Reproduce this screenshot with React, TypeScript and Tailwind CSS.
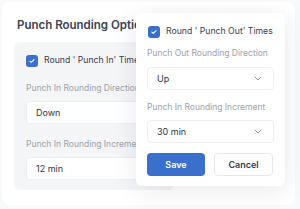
import React from "react";

const Check = () => (
	<span className="flex h-[12px] w-[12px] shrink-0 items-center justify-center rounded-[3px] bg-[#3a6fcb]">
		<svg width="8" height="8" viewBox="0 0 8 8" fill="none">
			<path d="M1.9 4.1 L3.3 5.4 L6.1 2.7" stroke="white" strokeWidth="1.1" strokeLinecap="round" strokeLinejoin="round" />
		</svg>
	</span>
);

const Chevron = () => (
	<svg width="8" height="5" viewBox="0 0 8 5" fill="none">
		<path d="M1 1 L4 4 L7 1" stroke="#8b919b" strokeWidth="1" strokeLinecap="round" strokeLinejoin="round" />
	</svg>
);

const Field = ({ value, chevron }: { value: string; chevron?: boolean }) => (
	<div className="flex h-[23px] items-center justify-between rounded-[4px] border border-[#eceef2] bg-white pl-[9px] pr-[11px] text-[9px] text-[#2f3541]">
		<span>{value}</span>
		{chevron && <Chevron />}
	</div>
);

export default function App() {
	return (
		<div
			className="relative h-[209px] w-[300px] overflow-hidden bg-[#f8f9fb] p-[2px]"
			style={{ fontFamily: "Inter, 'Noto Sans', sans-serif" }}>
			<div className="h-[203px] w-[293px] rounded-[8px] bg-white pl-[12px] pt-[13px]">
				<h2 className="whitespace-nowrap pl-[3px] text-[11.5px] font-semibold leading-[20px] text-[#3c4250]">
					Punch Rounding Options
				</h2>
				<div className="mt-[7px] w-[160px] rounded-[6px] bg-[#f4f5f7] pb-[10px] pl-[12px] pr-[12px] pt-[11px]">
					<div className="flex h-[16px] items-center gap-[6px]">
						<Check />
						<span className="whitespace-nowrap text-[8.7px] text-[#3a404c]">
							Round ' Punch In' Times
						</span>
					</div>
					<p className="mt-[12px] whitespace-nowrap text-[8.5px] leading-[14px] text-[#9ba1aa]">
						Punch In Rounding Direction
					</p>
					<div className="mt-[6px]">
						<Field value="Down" />
					</div>
					<p className="mt-[13px] whitespace-nowrap text-[8.5px] leading-[14px] text-[#9ba1aa]">
						Punch In Rounding Increment
					</p>
					<div className="mt-[6px]">
						<Field value="12 min" />
					</div>
				</div>
			</div>

			<div className="absolute left-[136px] top-[13px] w-[149px] rounded-[6px] bg-white px-[11px] pb-[10px] pt-[11px] shadow-[0_4px_24px_rgba(30,40,70,0.10)]">
				<div className="flex h-[16px] items-center gap-[6px] pl-[1px]">
					<Check />
					<span className="whitespace-nowrap text-[8.7px] text-[#3a404c]">
						Round ' Punch Out' Times
					</span>
				</div>
				<p className="mt-[6px] whitespace-nowrap text-[8.5px] leading-[14px] text-[#9ba1aa]">
					Punch Out Rounding Direction
				</p>
				<div className="mt-[7px]">
					<Field value="Up" chevron />
				</div>
				<p className="mt-[10px] whitespace-nowrap text-[8.5px] leading-[14px] text-[#9ba1aa]">
					Punch In Rounding Increment
				</p>
				<div className="mt-[6px]">
					<Field value="30 min" chevron />
				</div>
				<div className="mt-[10px] flex gap-[9px]">
					<button className="h-[23px] w-[58px] rounded-[4px] bg-[#3a6fcb] text-[9px] font-semibold text-white">
						Save
					</button>
					<button className="h-[23px] w-[59px] rounded-[4px] border border-[#e6e8ec] bg-white text-[9px] font-semibold text-[#3a404c]">
						Cancel
					</button>
				</div>
			</div>
		</div>
	);
}
